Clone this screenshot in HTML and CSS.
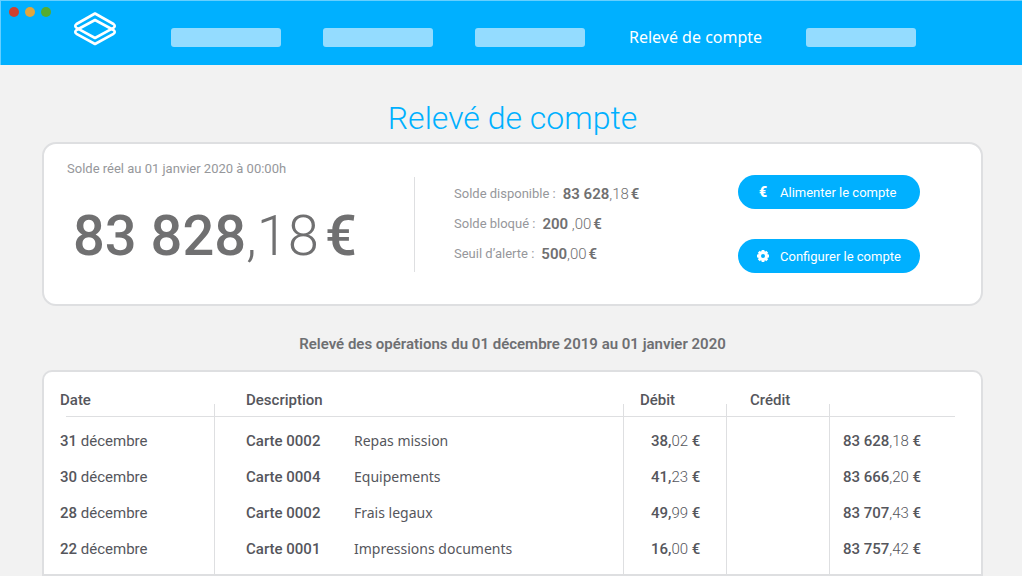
FILE: index.html
```html
<!DOCTYPE html>
<html lang="fr">
<head>
	<meta charset="UTF-8">
	<meta name="viewport" content="width=device-width, initial-scale=1">
	<title>Relevé de compte</title>
	<link rel="stylesheet" href="styles.css">
</head>
<body>
	<div class="page">
		<header class="topbar">
			<div class="dots">
				<span class="dot red"></span>
				<span class="dot orange"></span>
				<span class="dot green"></span>
			</div>
			<a class="logo" href="#" aria-label="Accueil">
				<svg width="44" height="36" viewBox="0 0 44 36" fill="none" stroke="#fff" stroke-width="2.6" stroke-linejoin="round">
					<path d="M22 2.500L40.500 13Q43 14.900 40.500 16.800L22 27L3.500 16.800Q1 14.900 3.500 13Z"/>
					<path d="M22 9L40.500 19Q43 20.900 40.500 22.800L22 33L3.500 22.800Q1 20.900 3.500 19Z"/>
				</svg>
			</a>
			<nav class="nav">
				<a class="blank" href="#" aria-label="Accueil"></a>
				<a class="blank" href="#" aria-label="Cartes"></a>
				<a class="blank" href="#" aria-label="Dépenses"></a>
				<a class="current" href="#">Relevé de compte</a>
				<a class="blank" href="#" aria-label="Profil"></a>
			</nav>
		</header>

		<main>
			<h1>Relevé de compte</h1>

			<section class="card summary">
				<div class="balance">
					<p class="label">Solde réel au 01 janvier 2020 à 00:00h</p>
					<p class="total"><b>83 828</b><i>,18</i><b class="euro">€</b></p>
				</div>
				<dl class="details">
					<div><dt>Solde disponible :</dt><dd><b>83 628</b>,18<b class="euro">€</b></dd></div>
					<div><dt>Solde bloqué :</dt><dd><b>200</b> ,00<b class="euro">€</b></dd></div>
					<div><dt>Seuil d’alerte :</dt><dd><b>500</b>,00<b class="euro">€</b></dd></div>
				</dl>
				<div class="actions">
					<button type="button"><span class="icon">€</span>Alimenter le compte</button>
					<button type="button">
						<span class="icon">
							<svg width="12" height="12" viewBox="0 0 12 12">
								<circle cx="6" cy="6" r="3.500" fill="none" stroke="#fff" stroke-width="3"/>
								<path d="M6 0V2M6 10V12M0 6H2M10 6H12M1.800 1.800L3 3M9 9L10.200 10.200M10.200 1.800L9 3M3 9L1.800 10.200" stroke="#fff" stroke-width="2.800"/>
							</svg>
						</span>Configurer le compte
					</button>
				</div>
			</section>

			<h2>Relevé des opérations du 01 décembre 2019 au 01 janvier 2020</h2>

			<section class="card operations">
				<table>
					<colgroup>
						<col class="col-date">
						<col class="col-card">
						<col>
						<col class="col-amount">
						<col class="col-amount">
						<col class="col-balance">
					</colgroup>
					<thead>
						<tr>
							<th class="line">Date</th>
							<th>Description</th>
							<th class="line"></th>
							<th class="line">Débit</th>
							<th class="line credit">Crédit</th>
							<th></th>
						</tr>
					</thead>
					<tbody>
						<tr>
							<td class="line date"><b>31</b> décembre</td>
							<td class="carte">Carte 0002</td>
							<td class="line what">Repas mission</td>
							<td class="line amount"><b>38,</b>02 <b>€</b></td>
							<td class="line"></td>
							<td><b>83 628</b>,18 <b>€</b></td>
						</tr>
						<tr>
							<td class="line date"><b>30</b> décembre</td>
							<td class="carte">Carte 0004</td>
							<td class="line what">Equipements</td>
							<td class="line amount"><b>41,</b>23 <b>€</b></td>
							<td class="line"></td>
							<td><b>83 666</b>,20 <b>€</b></td>
						</tr>
						<tr>
							<td class="line date"><b>28</b> décembre</td>
							<td class="carte">Carte 0002</td>
							<td class="line what">Frais legaux</td>
							<td class="line amount"><b>49,</b>99 <b>€</b></td>
							<td class="line"></td>
							<td><b>83 707</b>,43 <b>€</b></td>
						</tr>
						<tr>
							<td class="line date"><b>22</b> décembre</td>
							<td class="carte">Carte 0001</td>
							<td class="line what">Impressions documents</td>
							<td class="line amount"><b>16,</b>00 <b>€</b></td>
							<td class="line"></td>
							<td><b>83 757</b>,42 <b>€</b></td>
						</tr>
					</tbody>
				</table>
			</section>
		</main>
	</div>
</body>
</html>
```

FILE: styles.css
```css
* {
	margin: 0;
	padding: 0;
	box-sizing: border-box;
}
body {
	background: #fff;
	color: #55565c;
	font-family: Roboto, "Liberation Sans", sans-serif;
	font-size: 15px;
}
a {
	color: inherit;
	text-decoration: none;
}
b {
	font-weight: 500;
}
.page {
	margin-right: 2px;
	background: #f2f2f2;
}

/* header */
.topbar {
	display: flex;
	position: relative;
	height: 65px;
	padding-left: 72px;
	border-top: 1px solid #66cfff;
	border-left: 1px solid #66cfff;
	background: #00b0ff;
}
.dots {
	display: flex;
	gap: 6px;
	position: absolute;
	top: 6px;
	left: 8px;
}
.dot {
	width: 10px;
	height: 10px;
	border-radius: 50%;
}
.red {
	background: #d0402f;
}
.orange {
	background: #e2a63c;
}
.green {
	background: #55ac30;
}
.logo {
	width: 98px;
	padding-top: 10px;
}
.nav {
	display: flex;
	align-items: center;
	gap: 42px;
	padding-top: 8px;
}
.blank {
	width: 110px;
	height: 19px;
	border-radius: 3px;
	background: #94dcff;
}
.current {
	padding: 0 2px;
	color: #fff;
	font-family: "Noto Sans", sans-serif;
	font-size: 16px;
}

main {
	padding: 0 39px 0 42px;
}
h1 {
	padding: 32px 0 3px;
	color: #00b0ff;
	font-size: 32px;
	font-weight: 300;
	line-height: 42px;
	text-align: center;
}
h2 {
	padding: 28px 0 16px;
	color: #6e6f72;
	font-size: 15px;
	font-weight: 600;
	line-height: 20px;
	text-align: center;
}
.card {
	border: 2px solid #dedfe1;
	background: #fff;
}

/* balance */
.summary {
	display: flex;
	height: 164px;
	border-radius: 14px;
}
.balance {
	width: 348px;
	padding: 15px 0 0 23px;
}
.label {
	color: #96979b;
	font-size: 13px;
	line-height: 20px;
}
.total {
	padding: 25px 0 0 6px;
	color: #707071;
	font-size: 56px;
	line-height: 64px;
	white-space: nowrap;
}
.total i {
	font-style: normal;
	font-weight: 300;
}
.total .euro {
	margin-left: 6px;
}
.details {
	display: flex;
	flex: 1;
	flex-direction: column;
	align-self: flex-start;
	height: 95px;
	margin-top: 33px;
	margin-left: 22px;
	padding: 2px 0 0 39px;
	border-left: 1px solid #dedfe1;
}
.details div {
	display: flex;
	gap: 7px;
	line-height: 30px;
}
.details dt {
	color: #96979b;
	font-size: 13px;
}
.details dd {
	color: #707071;
	font-size: 15px;
	font-weight: 300;
}
.details b {
	font-weight: 600;
}
.details .euro {
	margin-left: 2px;
}
.actions {
	display: flex;
	flex-direction: column;
	gap: 30px;
	margin-right: 61px;
	padding-top: 31px;
}
button {
	display: flex;
	align-items: center;
	width: 182px;
	height: 34px;
	padding-left: 17px;
	border: 0;
	border-radius: 17px;
	background: #00b0ff;
	color: #fff;
	font-family: inherit;
	font-size: 13px;
	cursor: pointer;
}
.icon {
	display: flex;
	justify-content: center;
	width: 16px;
	margin-right: 9px;
	font-size: 14px;
	font-weight: 900;
}

/* operations */
.operations {
	padding-right: 26px;
	border-radius: 10px 10px 0 0;
}
table {
	width: 100%;
	table-layout: fixed;
	border-collapse: collapse;
}
.col-date {
	width: 171px;
}
.col-card {
	width: 139px;
}
.col-amount {
	width: 103px;
}
.col-balance {
	width: 125px;
}
th {
	height: 45px;
	padding: 16px 0 3px 16px;
	background: linear-gradient(#dedfe1, #dedfe1) 0 100% / 100% 1px no-repeat;
	font-size: 15px;
	font-weight: 500;
	line-height: 24px;
	text-align: left;
	vertical-align: top;
}
th.line {
	background:
		linear-gradient(#dedfe1, #dedfe1) 0 100% / 100% 1px no-repeat,
		linear-gradient(#dedfe1, #dedfe1) 100% 100% / 1px 13px no-repeat;
}
/* the rule under the titles starts inside the card */
th:first-child {
	background:
		linear-gradient(#dedfe1, #dedfe1) 100% 100% / 149px 1px no-repeat,
		linear-gradient(#dedfe1, #dedfe1) 100% 100% / 1px 13px no-repeat;
}
th:nth-child(2),
td.carte {
	padding-left: 31px;
}
th.credit {
	padding-left: 23px;
}
td {
	height: 36px;
	padding-left: 16px;
	font-size: 15px;
	font-weight: 300;
	line-height: 22px;
	vertical-align: middle;
	white-space: nowrap;
}
td.line {
	background: linear-gradient(#dedfe1, #dedfe1) 100% 0 / 1px 100% no-repeat;
}
td.date {
	font-weight: 400;
}
td.carte {
	font-weight: 500;
}
td.what {
	padding-left: 0;
	font-family: "Noto Sans", sans-serif;
	font-size: 14px;
	font-weight: 400;
}
td.amount {
	padding-left: 27px;
}
td:last-child {
	padding-left: 13px;
}
tbody tr:first-child td {
	height: 42px;
	padding-top: 6px;
}
tbody tr:last-child td {
	height: 43px;
	padding-bottom: 7px;
}
```
